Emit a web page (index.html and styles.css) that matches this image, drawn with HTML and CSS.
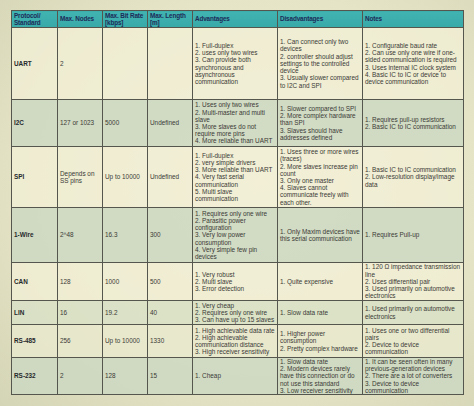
FILE: index.html
```html
<!DOCTYPE html>
<html>
<head>
<meta charset="utf-8">
<link rel="stylesheet" href="styles.css">
</head>
<body>
<div class="page">
<table class="proto">
<colgroup>
<col class="c1"><col class="c2"><col class="c3"><col class="c4"><col class="c5"><col class="c6"><col class="c7">
</colgroup>
<thead>
<tr class="hdr">
<th>Protocol/<br>Standard</th><th>Max. Nodes</th><th>Max. Bit Rate<br>[kbps]</th><th>Max. Length<br>[m]</th><th>Advantages</th><th>Disadvantages</th><th>Notes</th>
</tr>
</thead>
<tbody>
<tr class="r-uart cream">
<td class="name">UART</td><td>2</td><td></td><td></td>
<td>1. Full-duplex<br>2. uses only two wires<br>3. Can provide both synchronous and asynchronous communication</td>
<td>1. Can connect only two devices<br>2. controller should adjust settings to the controlled device<br>3. Usually slower compared to I2C and SPI</td>
<td>1. Configurable baud rate<br>2. Can use only one wire if one-sided communication is required<br>3. Uses internal IC clock system<br>4. Basic IC to IC or device to device communication</td>
</tr>
<tr class="r-i2c green">
<td class="name">I2C</td><td>127 or 1023</td><td>5000</td><td>Undefined</td>
<td>1. Uses only two wires<br>2. Multi-master and multi slave<br>3. More slaves do not require more pins<br>4. More reliable than UART</td>
<td>1. Slower compared to SPI<br>2. More complex hardware than SPI<br>3. Slaves should have addresses defined</td>
<td>1. Requires pull-up resistors<br>2. Basic IC to IC communication</td>
</tr>
<tr class="r-spi cream">
<td class="name">SPI</td><td>Depends on SS pins</td><td>Up to 10000</td><td>Undefined</td>
<td>1. Full-duplex<br>2. very simple drivers<br>3. More reliable than UART<br>4. Very fast serial communication<br>5. Multi slave communication</td>
<td>1. Uses three or more wires (traces)<br>2. More slaves increase pin count<br>3. Only one master<br>4. Slaves cannot communicate freely with each other.</td>
<td>1. Basic IC to IC communication<br>2. Low-resolution display/image data</td>
</tr>
<tr class="r-1w green">
<td class="name">1-Wire</td><td>2^48</td><td>16.3</td><td>300</td>
<td>1. Requires only one wire<br>2. Parasitic power configuration<br>3. Very low power consumption<br>4. Very simple few pin devices</td>
<td>1. Only Maxim devices have this serial communication</td>
<td>1. Requires Pull-up</td>
</tr>
<tr class="r-can cream">
<td class="name">CAN</td><td>128</td><td>1000</td><td>500</td>
<td>1. Very robust<br>2. Multi slave<br>3. Error detection</td>
<td>1. Quite expensive</td>
<td>1. 120 Ω impedance transmission line<br>2. Uses differential pair<br>3. Used primarily on automotive electronics</td>
</tr>
<tr class="r-lin green2">
<td class="name">LIN</td><td>16</td><td>19.2</td><td>40</td>
<td>1. Very cheap<br>2. Requires only one wire<br>3. Can have up to 15 slaves</td>
<td>1. Slow data rate</td>
<td>1. Used primarily on automotive electronics</td>
</tr>
<tr class="r-485 cream2">
<td class="name">RS-485</td><td>256</td><td>Up to 10000</td><td>1330</td>
<td>1. High achievable data rate<br>2. High achievable communication distance<br>3. High receiver sensitivity</td>
<td>1. Higher power consumption<br>2. Pretty complex hardware</td>
<td>1. Uses one or two differential pairs<br>2. Device to device communication</td>
</tr>
<tr class="r-232 green">
<td class="name">RS-232</td><td>2</td><td>128</td><td>15</td>
<td>1. Cheap</td>
<td>1. Slow data rate<br>2. Modern devices rarely have this connection or do not use this standard<br>3. Low receiver sensitivity</td>
<td>1. It can be seen often in many previous-generation devices<br>2. There are a lot of converters<br>3. Device to device communication</td>
</tr>
</tbody>
</table>
</div>
</body>
</html>
```
FILE: styles.css
```css
html, body {
  margin: 0;
  padding: 0;
}
body {
  width: 474px;
  height: 406px;
  overflow: hidden;
  background: radial-gradient(ellipse at 55% 45%, #f1efd6 0%, #e6e4c6 60%, #d4d5b6 100%);
  font-family: "Liberation Sans", Arial, sans-serif;
}
.page {
  padding: 10px 0 0 11px;
}
.proto {
  border-collapse: collapse;
  table-layout: fixed;
  width: 452px;
  font-size: 6.4px;
  line-height: 7.2px;
  color: #3a3a36;
  border: 1px solid #4e5048;
}
.c1 { width: 46px; }
.c2 { width: 45px; }
.c3 { width: 45px; }
.c4 { width: 45px; }
.c5 { width: 85px; }
.c6 { width: 85px; }
.c7 { width: 101px; }
.proto th, .proto td {
  border: 1px solid #55574e;
  padding: 0 1px 0 2px;
  vertical-align: middle;
  text-align: left;
  overflow: hidden;
}
.hdr th {
  height: 16px;
  background: linear-gradient(#41b3b1, #38a9a8);
  color: #1c2b58;
  font-weight: bold;
  font-size: 6.4px;
  line-height: 7.2px;
  white-space: nowrap;
  letter-spacing: -0.15px;
}
.name {
  font-weight: bold;
  color: #26292c;
}
.cream { background: rgba(241, 239, 214, 0.75); }
.cream2 { background: rgba(232, 232, 206, 0.8); }
.green { background: rgba(204, 216, 194, 0.85); }
.green2 { background: rgba(216, 224, 198, 0.85); }
.r-uart td { height: 71px; }
.r-i2c td { height: 46px; }
.r-spi td { height: 60px; }
.r-1w td { height: 54px; }
.r-can td { height: 37px; }
.r-lin td { height: 23px; }
.r-485 td { height: 32px; }
.r-232 td { height: 36px; }
```
